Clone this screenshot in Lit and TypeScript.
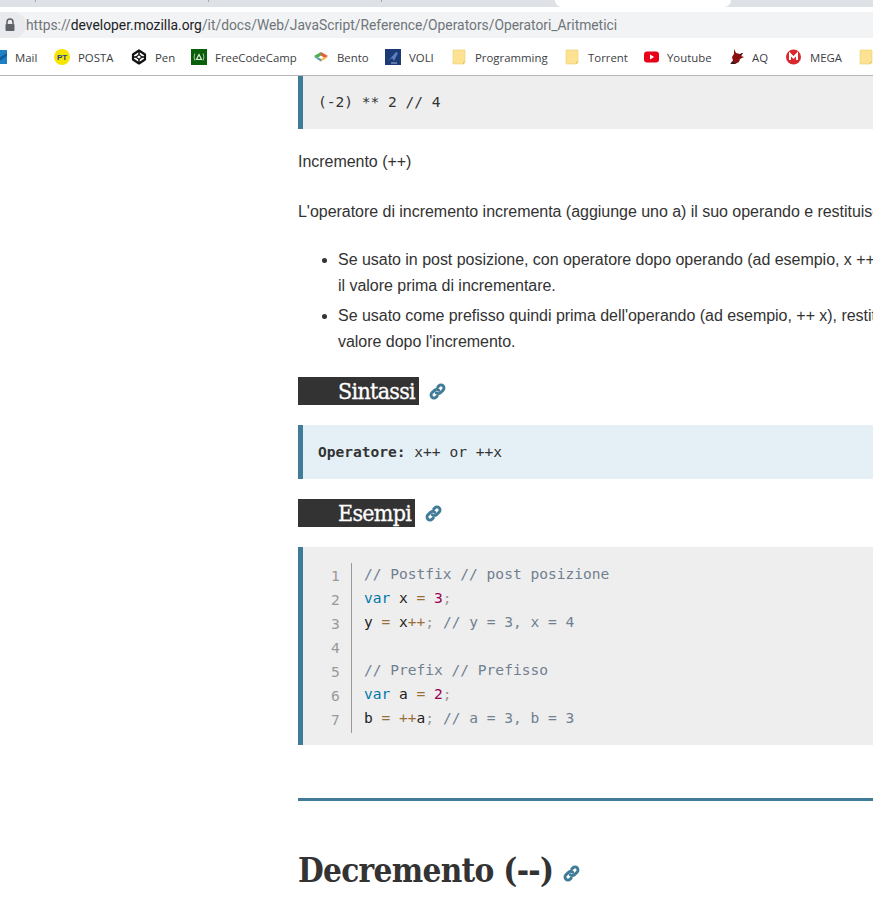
import { LitElement, html, css, svg } from "lit";
import { customElement } from "lit/decorators.js";

const folder = svg`<path d="M2 1h12v12.500L12.500 15H2z" fill="#fde293" stroke="#ecd070" stroke-width=".6"/><path d="M12.500 15v-2H14" fill="none" stroke="#d9b95a" stroke-width=".6"/>`;

const ICONS: Record<string, unknown> = {
  mail: svg`<rect x="0" y="1" width="16" height="14" fill="#1f7fc4"/><path d="M0 4l8 5 8-5v3l-8 5-8-5z" fill="#0d5c96"/>`,
  posta: svg`<circle cx="8" cy="8" r="8" fill="#f6e500"/><text x="8" y="11" text-anchor="middle" font-size="8" font-weight="700" font-family="Liberation Sans" fill="#1c3f8f">PT</text>`,
  pen: svg`<path d="M8 1.500l6 4v5l-6 4-6-4v-5z" fill="none" stroke="#111" stroke-width="2.200" stroke-linejoin="round"/><path d="M8 1.500v4M8 10.500v4M2 8h3M11 8h3" stroke="#111" stroke-width="1.500"/><path d="M8 5.500L11 8 8 10.500 5 8z" fill="none" stroke="#111" stroke-width="1.200"/>`,
  fcc: svg`<rect width="16" height="16" fill="#0a5f0a"/><path d="M8 5.500l2.500 5h-5z" fill="none" stroke="#dfeedd" stroke-width="1.200"/><path d="M3.800 4.500Q2.500 8 3.800 11.500M12.200 4.500Q13.500 8 12.200 11.500" fill="none" stroke="#9cc79c"/>`,
  bento: svg`<path d="M8 3L15 7 11.500 9 8 6.500z" fill="#ea5c33"/><path d="M8 3L1 7 4.500 9 8 6.500z" fill="#4caf50"/><path d="M1 8l7 4.500L15 8 11.500 8.500 8 10 4.500 8.500z" fill="#f6b83c"/><path d="M1 7.500L4.500 8.500 8 10v2.500z" fill="#2f9ed8"/>`,
  voli: svg`<rect width="16" height="16" fill="#1c3a75"/><path d="M3 12L11 3l2 1-4 8-2-3z" fill="#5c7fc0"/><path d="M6 14h6" stroke="#a7b8da"/>`,
  folder,
  youtube: svg`<rect x="1" y="2.500" width="15" height="11" rx="3" fill="#e8001b"/><path d="M7 5.500l4.200 2.500L7 10.500z" fill="#fff"/>`,
  aq: svg`<path d="M6 0l2 4 4 1 3-1-2 3 3 1-4 2-1 3-4 2-5 0 3-3-1-4 2-3z" fill="#8b1010"/><path d="M4 12l-1 3h5z" fill="#222"/><path d="M12 5l3-1-2 3z" fill="#222"/>`,
  mega: svg`<circle cx="7.500" cy="8" r="7.500" fill="#d9272e"/><path d="M4 11V5l3.500 3.500L11 5v6" fill="none" stroke="#fff" stroke-width="2"/>`,
};

// width is the distance from this icon's left edge to the next one
const BOOKMARKS = [
  { icon: "mail", label: "Mail", width: 63 },
  { icon: "posta", label: "POSTA", width: 77 },
  { icon: "pen", label: "Pen", width: 60 },
  { icon: "fcc", label: "FreeCodeCamp", width: 122 },
  { icon: "bento", label: "Bento", width: 72 },
  { icon: "voli", label: "VOLI", width: 66 },
  { icon: "folder", label: "Programming", width: 113 },
  { icon: "folder", label: "Torrent", width: 79 },
  { icon: "youtube", label: "Youtube", width: 85 },
  { icon: "aq", label: "AQ", width: 58 },
  { icon: "mega", label: "MEGA", width: 72 },
  { icon: "folder", label: "", width: 16 },
];

const CODE = [
  html`<span class="c">// Postfix // post posizione</span>`,
  html`<span class="k">var</span> x <span class="o">=</span> <span class="n">3</span><span class="p">;</span>`,
  html`y <span class="o">=</span> x<span class="o">++</span><span class="p">;</span> <span class="c">// y = 3, x = 4</span>`,
  html`&nbsp;`,
  html`<span class="c">// Prefix // Prefisso</span>`,
  html`<span class="k">var</span> a <span class="o">=</span> <span class="n">2</span><span class="p">;</span>`,
  html`b <span class="o">=</span> <span class="o">++</span>a<span class="p">;</span> <span class="c">// a = 3, b = 3</span>`,
];

const link = html`<svg class="link" viewBox="0 0 16 16"><path d="M6.800 9.200a2.800 2.800 0 0 0 4 0l2.500-2.500a2.800 2.800 0 0 0-4-4L8.200 3.800M9.200 6.800a2.800 2.800 0 0 0-4 0L2.700 9.300a2.800 2.800 0 0 0 4 4l1.100-1.100" fill="none" stroke="#407c97" stroke-width="2.700" stroke-linecap="round"/></svg>`;

@customElement("app-root")
export class AppRoot extends LitElement {
  static styles = css`
    :host { display: block; width: 873px; height: 912px; overflow: hidden; background: #fff; color: #333; font-family: "Liberation Sans", Arial, sans-serif; font-size: 16px; }
    .tabs { height: 7px; background: #dee1e6; display: flex; gap: 172px; padding-left: 35px; }
    .tick { width: 1px; height: 2px; background: #a9abaf; flex: none; }
    .tab-gap { width: 176px; margin-left: 1px; background: #fff; border-radius: 0 0 7px 7px; flex: none; }
    .toolbar { height: 32px; box-sizing: border-box; padding-top: 5px; }
    .url { height: 26px; background: #f1f3f4; display: flex; align-items: center; font-family: Roboto, sans-serif; font-size: 13.840px; color: #70757a; white-space: nowrap; }
    .lock { width: 26px; height: 26px; display: flex; align-items: center; justify-content: center; background: #e8eaed; border-radius: 0 13px 13px 0; flex: none; }
    .lock svg { width: 12px; height: 14px; margin-left: -6px; }
    .url b { font-weight: 400; color: #202124; }
    .bookmarks { height: 37px; box-sizing: border-box; border-bottom: 1px solid #b4b6b9; display: flex; align-items: center; margin-left: -9px; width: 900px; font-family: "Open Sans", sans-serif; font-size: 11.400px; color: #3c4043; white-space: nowrap; }
    .bm { display: flex; align-items: center; gap: 8px; flex: none; }
    .bm svg { width: 16px; height: 16px; flex: none; }
    main { padding-left: 298px; }
    .code, .note { border-left: 5px solid #407c97; background: #eee; }
    .top { height: 53px; display: flex; align-items: center; padding: 0 0 2px 15px; box-sizing: border-box; }
    .code, .note { font-family: "DejaVu Sans Mono", monospace; font-size: 14.550px; }
    p { margin: 0; line-height: 26px; white-space: nowrap; letter-spacing: -.03px; }
    .intro { margin-top: 20px; }
    .lead { margin-top: 24px; }
    ul { margin: 22px 0 0; padding: 0 0 0 40px; list-style: disc; }
    li { line-height: 26px; white-space: nowrap; letter-spacing: -.03px; }
    li + li { margin-top: 4px; }
    h3 { margin: 0; display: flex; align-items: center; gap: 10px; font-weight: 400; height: 28px; }
    h3 span { background: #333; color: #fff; padding: 0 4px 0 40px; height: 28px; line-height: 28px; font-family: "DejaVu Serif Condensed", "DejaVu Serif", serif; font-stretch: condensed; font-size: 23px; letter-spacing: -.7px; -webkit-text-stroke: .3px #fff; }
    h3.syntax { margin-top: 22px; }
    .note { margin-top: 20px; height: 54px; display: flex; align-items: center; padding: 0 0 2px 15px; box-sizing: border-box; background: #e4f0f5; color: #333; }
    h3.examples { margin-top: 20px; }
    .link { width: 17px; height: 17px; flex: none; }
    .code.full { margin-top: 20px; height: 198px; box-sizing: border-box; padding: 16px 0 0 28px; display: flex; }
    .gutter { width: 20px; border-right: 1px solid #999; color: #999; text-align: left; height: 170px; }
    .gutter div { height: 24px; line-height: 26px; }
    .lines { padding-left: 12px; color: #222; margin-top: -1px; }
    .lines div { height: 24px; line-height: 24px; white-space: pre; }
    .c { color: #708090; } .k { color: #07a; } .o { color: #9a6e3a; } .n { color: #905; } .p { color: #999; }
    hr { margin: 53px 0 0; border: 0; height: 3px; background: #407c97; }
    h2 { margin: 48px 0 0; display: flex; align-items: center; gap: 10px; font-family: "DejaVu Serif Condensed", "DejaVu Serif", serif; font-stretch: condensed; font-size: 33px; font-weight: 700; line-height: 44px; letter-spacing: -.7px; color: #333; white-space: nowrap; }
    h2 .link { margin-top: 4px; }
  `;

  render() {
    return html`
      <div class="tabs">
        <div class="tick"></div>
        <div class="tick"></div>
        <div class="tick"></div>
        <div class="tab-gap"></div>
      </div>
      <div class="toolbar">
        <div class="url">
          <div class="lock"><svg viewBox="0 0 12 14"><path d="M3 6V4a3 3 0 0 1 6 0v2" fill="none" stroke="#5f6368" stroke-width="1.500"/><rect x="1.500" y="6" width="9" height="7" rx="1" fill="#5f6368"/></svg></div>
          https://<b>developer.mozilla.org</b>/it/docs/Web/JavaScript/Reference/Operators/Operatori_Aritmetici
        </div>
      </div>
      <nav class="bookmarks">
        ${BOOKMARKS.map(
          (b) => html`<div class="bm" style="width:${b.width}px"><svg viewBox="0 0 16 16">${ICONS[b.icon]}</svg>${b.label}</div>`
        )}
      </nav>
      <main>
        <div class="code top">(-2) ** 2 // 4</div>
        <p class="intro">Incremento (++)</p>
        <p class="lead">L'operatore di incremento incrementa (aggiunge uno a) il suo operando e restituisce un valore.</p>
        <ul>
          <li>Se usato in post posizione, con operatore dopo operando (ad esempio, x ++), restituisce<br />il valore prima di incrementare.</li>
          <li>Se usato come prefisso quindi prima dell'operando (ad esempio, ++ x), restituisce il<br />valore dopo l'incremento.</li>
        </ul>
        <h3 class="syntax"><span>Sintassi</span>${link}</h3>
        <div class="note"><strong>Operatore:</strong>&nbsp;x++ or ++x</div>
        <h3 class="examples"><span>Esempi</span>${link}</h3>
        <div class="code full">
          <div class="gutter">${CODE.map((_, i) => html`<div>${i + 1}</div>`)}</div>
          <div class="lines">${CODE.map((l) => html`<div>${l}</div>`)}</div>
        </div>
        <hr />
        <h2>Decremento (--) ${link}</h2>
      </main>
    `;
  }
}
